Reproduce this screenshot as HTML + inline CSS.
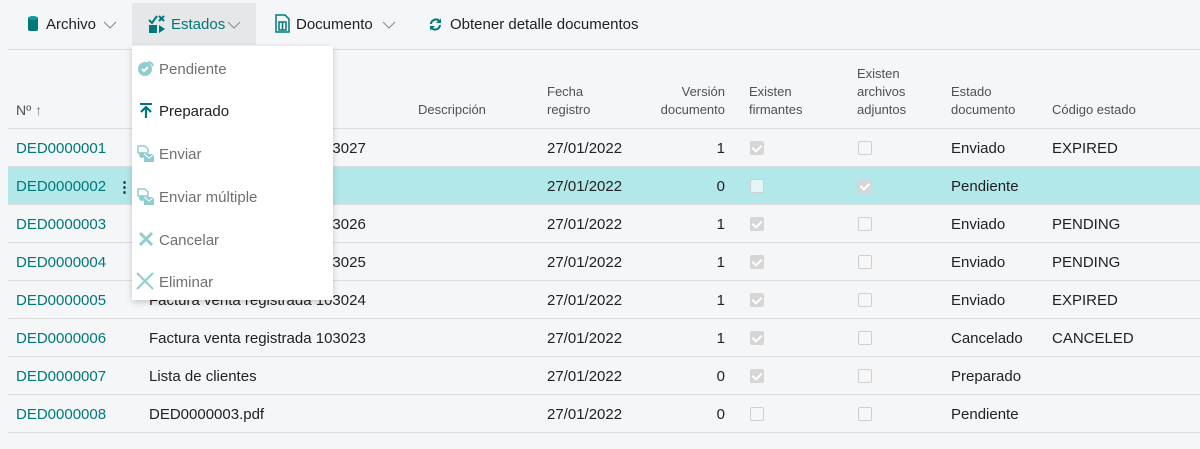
<!DOCTYPE html>
<html><head><style>
body{margin:0;width:1200px;height:449px;background:#f5f6f8;font-family:"Liberation Sans",sans-serif;color:#212121;position:relative;overflow:hidden}
.a{position:absolute;white-space:nowrap}
.tb{font-size:15px;top:16px;line-height:18px}
.h{font-size:13px;color:#505050;line-height:18px}
.line{position:absolute;left:8px;right:0;height:1px;background:#dcdcdc}
.r{font-size:15px}
.id{color:#00787a}
.cb{position:absolute;width:12px;height:12px;border:1px solid #cfcfcf;border-radius:2px;background:#f7f7f7}
.cb.c{background:#d6d6d6;border-color:#d6d6d6}
.cb.c:after{content:"";position:absolute;left:3px;top:1px;width:4px;height:7px;border:solid #fff;border-width:0 2px 2px 0;transform:rotate(45deg)}
.menu{position:absolute;left:132px;top:46px;width:201px;height:254px;background:#fff;box-shadow:0 2px 6px rgba(0,0,0,.2)}
.mi{position:absolute;left:27px;font-size:15px;color:#707070}
.chev{position:absolute;top:21px}
</style></head><body>
<div style="position:absolute;left:132px;top:3px;width:124px;height:42px;background:#e6e7e9"></div>
<svg class="a" style="left:27px;top:15px" width="12" height="18"><rect x="1" y="2" width="10" height="14" rx="2" fill="#00787a"/><ellipse cx="6" cy="3" rx="5" ry="2" fill="#0a9a9c"/></svg>
<div class="a tb" style="left:46px">Archivo</div>
<svg class="chev" style="left:103px" width="14" height="9"><path d="M1 1l6 6 6-6" stroke="#888" fill="none"/></svg>
<svg class="a" style="left:147px;top:14px" width="20" height="20"><path d="M2 6l3 3 5-7" stroke="#00787a" stroke-width="2" fill="none"/><path d="M12 2l5 5M17 2l-5 5" stroke="#00787a" stroke-width="2"/><rect x="2" y="11" width="8" height="8" fill="#00787a"/><path d="M12 11l6 4-6 4z" fill="#00787a"/></svg>
<div class="a tb" style="left:171px;color:#00787a">Estados</div>
<svg class="chev" style="left:227px" width="14" height="9"><path d="M1 1l6 6 6-6" stroke="#888" fill="none"/></svg>
<svg class="a" style="left:275px;top:14px" width="15" height="19"><path d="M1 1h9l4 4v13H1z" fill="none" stroke="#00787a" stroke-width="1.5"/><rect x="4" y="8" width="7" height="8" fill="none" stroke="#00787a" stroke-width="1.5"/><path d="M7.5 8v8" stroke="#00787a" stroke-width="1.5"/></svg>
<div class="a tb" style="left:296px">Documento</div>
<svg class="chev" style="left:382px" width="14" height="9"><path d="M1 1l6 6 6-6" stroke="#888" fill="none"/></svg>
<svg class="a" style="left:427px;top:16px" width="17" height="17"><path d="M3 8a6 6 0 0 1 10-4l1-2v5h-5l2-2a4 4 0 0 0-6 3z" fill="#00787a"/><path d="M14 9a6 6 0 0 1-10 4l-1 2v-5h5l-2 2a4 4 0 0 0 6-3z" fill="#00787a"/></svg>
<div class="a tb" style="left:450px">Obtener detalle documentos</div>
<div class="line" style="top:49px"></div>

<div class="a h" style="left:16px;top:101px;font-size:14px">Nº <span style="color:#777">↑</span></div>
<div class="a h" style="left:418px;top:101px">Descripción</div>
<div class="a h" style="left:547px;top:83px">Fecha<br>registro</div>
<div class="a h" style="right:475px;top:83px;text-align:right">Versión<br>documento</div>
<div class="a h" style="left:749px;top:83px">Existen<br>firmantes</div>
<div class="a h" style="left:857px;top:65px">Existen<br>archivos<br>adjuntos</div>
<div class="a h" style="left:951px;top:83px">Estado<br>documento</div>
<div class="a h" style="left:1052px;top:101px">Código estado</div>

<div style="position:absolute;left:8px;right:0;top:166px;height:38px;background:#b2e8ea"></div>
<div class="line" style="top:128px"></div>
<div class="line" style="top:166px"></div><div class="line" style="top:204px"></div>
<div class="line" style="top:242px"></div><div class="line" style="top:280px"></div>
<div class="line" style="top:318px"></div><div class="line" style="top:356px"></div>
<div class="line" style="top:394px"></div><div class="line" style="top:432px"></div>

<div class="a r" style="top:140px;left:0;width:1200px;height:20px">
<span class="a id" style="left:16px">DED0000001</span><span class="a" style="left:149px">Factura venta registrada 103027</span><span class="a" style="left:547px">27/01/2022</span><span class="a" style="right:475px">1</span><span class="cb c" style="left:750px;top:1px"></span><span class="cb" style="left:858px;top:1px"></span><span class="a" style="left:951px">Enviado</span><span class="a" style="left:1052px">EXPIRED</span></div>
<div class="a r" style="top:178px;left:0;width:1200px;height:20px">
<span class="a id" style="left:16px">DED0000002</span><span class="a" style="left:117px;font-weight:bold">⋮</span><span class="a" style="left:547px">27/01/2022</span><span class="a" style="right:475px">0</span><span class="cb" style="left:750px;top:1px;background:#e3f6f7"></span><span class="cb c" style="left:858px;top:1px"></span><span class="a" style="left:951px">Pendiente</span></div>
<div class="a r" style="top:216px;left:0;width:1200px;height:20px">
<span class="a id" style="left:16px">DED0000003</span><span class="a" style="left:149px">Factura venta registrada 103026</span><span class="a" style="left:547px">27/01/2022</span><span class="a" style="right:475px">1</span><span class="cb c" style="left:750px;top:1px"></span><span class="cb" style="left:858px;top:1px"></span><span class="a" style="left:951px">Enviado</span><span class="a" style="left:1052px">PENDING</span></div>
<div class="a r" style="top:254px;left:0;width:1200px;height:20px">
<span class="a id" style="left:16px">DED0000004</span><span class="a" style="left:149px">Factura venta registrada 103025</span><span class="a" style="left:547px">27/01/2022</span><span class="a" style="right:475px">1</span><span class="cb c" style="left:750px;top:1px"></span><span class="cb" style="left:858px;top:1px"></span><span class="a" style="left:951px">Enviado</span><span class="a" style="left:1052px">PENDING</span></div>
<div class="a r" style="top:292px;left:0;width:1200px;height:20px">
<span class="a id" style="left:16px">DED0000005</span><span class="a" style="left:149px">Factura venta registrada 103024</span><span class="a" style="left:547px">27/01/2022</span><span class="a" style="right:475px">1</span><span class="cb c" style="left:750px;top:1px"></span><span class="cb" style="left:858px;top:1px"></span><span class="a" style="left:951px">Enviado</span><span class="a" style="left:1052px">EXPIRED</span></div>
<div class="a r" style="top:330px;left:0;width:1200px;height:20px">
<span class="a id" style="left:16px">DED0000006</span><span class="a" style="left:149px">Factura venta registrada 103023</span><span class="a" style="left:547px">27/01/2022</span><span class="a" style="right:475px">1</span><span class="cb c" style="left:750px;top:1px"></span><span class="cb" style="left:858px;top:1px"></span><span class="a" style="left:951px">Cancelado</span><span class="a" style="left:1052px">CANCELED</span></div>
<div class="a r" style="top:368px;left:0;width:1200px;height:20px">
<span class="a id" style="left:16px">DED0000007</span><span class="a" style="left:149px">Lista de clientes</span><span class="a" style="left:547px">27/01/2022</span><span class="a" style="right:475px">0</span><span class="cb c" style="left:750px;top:1px"></span><span class="cb" style="left:858px;top:1px"></span><span class="a" style="left:951px">Preparado</span></div>
<div class="a r" style="top:406px;left:0;width:1200px;height:20px">
<span class="a id" style="left:16px">DED0000008</span><span class="a" style="left:149px">DED0000003.pdf</span><span class="a" style="left:547px">27/01/2022</span><span class="a" style="right:475px">0</span><span class="cb" style="left:750px;top:1px"></span><span class="cb" style="left:858px;top:1px"></span><span class="a" style="left:951px">Pendiente</span></div>

<div class="menu">
<svg class="a" style="left:5px;top:13px" width="18" height="18"><circle cx="8" cy="10" r="7" fill="#8fcdd0"/><path d="M5 10l2 2 4-4" stroke="#fff" stroke-width="2" fill="none"/><path d="M11 3a5 5 0 0 1 5 4" stroke="#8fcdd0" stroke-width="2" fill="none"/></svg>
<div class="mi" style="top:15px">Pendiente</div>
<svg class="a" style="left:7px;top:56px" width="14" height="18"><path d="M1 2h12" stroke="#00787a" stroke-width="2"/><path d="M7 16V6M2 10l5-5 5 5" stroke="#00787a" stroke-width="2.2" fill="none"/></svg>
<div class="mi" style="top:57px;color:#212121">Preparado</div>
<svg class="a" style="left:4px;top:98px" width="20" height="20"><path d="M2 2h7l3 3v4H2z" fill="none" stroke="#8fcdd0" stroke-width="1.5"/><circle cx="6" cy="11" r="3" fill="#8fcdd0"/><rect x="8" y="10" width="10" height="8" fill="#8fcdd0"/><path d="M8 10l5 4 5-4" stroke="#fff" fill="none"/></svg>
<div class="mi" style="top:100px">Enviar</div>
<svg class="a" style="left:4px;top:141px" width="20" height="20"><path d="M2 2h7l3 3v4H2z" fill="none" stroke="#8fcdd0" stroke-width="1.5"/><circle cx="6" cy="11" r="3" fill="#8fcdd0"/><rect x="8" y="10" width="10" height="8" fill="#8fcdd0"/><path d="M8 10l5 4 5-4" stroke="#fff" fill="none"/></svg>
<div class="mi" style="top:143px">Enviar múltiple</div>
<svg class="a" style="left:6px;top:185px" width="16" height="16"><path d="M2 2l12 12M14 2L2 14" stroke="#8fcdd0" stroke-width="3"/></svg>
<div class="mi" style="top:186px">Cancelar</div>
<svg class="a" style="left:4px;top:226px" width="18" height="18"><path d="M1 1l16 16M17 1L1 17" stroke="#8fcdd0" stroke-width="2"/></svg>
<div class="mi" style="top:228px">Eliminar</div>
</div>
</body></html>
